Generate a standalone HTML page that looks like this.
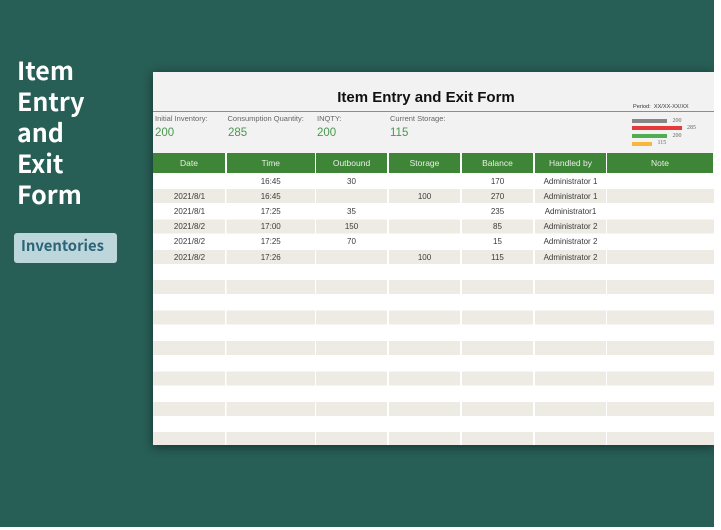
<!DOCTYPE html>
<html lang="en"><head><meta charset="utf-8"><title>Item Entry and Exit Form</title>
<style>
html,body{margin:0;padding:0;width:721px;height:530px;overflow:hidden;background:#fff}
*{box-sizing:border-box}
#bg{position:absolute;left:0;top:0;width:714px;height:527px;background:#275e55;overflow:hidden}
#side{position:absolute;left:17px;top:54.5px;font:700 25px/31px "Noto Sans CJK SC","Liberation Sans",sans-serif;color:#fff;filter:blur(.3px)}
#tag{position:absolute;left:14px;top:233px;width:103px;height:30px;background:#bdd6dc;border-radius:3px;color:#2c6478;font:700 14.8px/25px "Noto Sans CJK SC","Liberation Sans",sans-serif;padding-left:7px;filter:blur(.2px)}
#panel{position:absolute;left:153px;top:72px;width:561px;height:373px;background:#fff;box-shadow:0 2px 10px rgba(0,0,0,.45)}
#top{position:absolute;left:0;top:0;width:561px;height:81px;background:#f2f2f2}
#rule{position:absolute;left:0;top:39px;width:561px;height:1px;background:#62a868}
.a{position:absolute;font-family:"Liberation Sans",sans-serif;white-space:nowrap;filter:blur(.25px)}
#title{left:0;width:546px;top:16px;text-align:center;font-size:15px;font-weight:700;color:#111;line-height:20px}
.l{font-size:7.5px;color:#666;top:41px;line-height:11px}
.v{font-size:11.5px;color:#48984f;top:54px;line-height:14px}
.c{position:absolute;text-align:center;font:8px/15px "Liberation Sans",sans-serif;color:#3a3a3a;filter:blur(.2px)}
.h{position:absolute;top:81px;height:20px;background:#3f8537;color:#e6f0e4;text-align:center;font:8.5px/20px "Liberation Sans",sans-serif}
.b{position:absolute;height:4px;left:479px}
.n{position:absolute;font:6px/7px "Liberation Serif",serif;color:#666}
</style></head><body>
<div id="bg">
<div id="side">Item<br>Entry<br>and<br>Exit<br>Form</div>
<div id="tag">Inventories</div>
<div id="panel">
<div id="top"></div><div id="rule"></div>
<div class="a" id="title">Item Entry and Exit Form</div>
<div class="a" style="left:480px;top:30.5px;font-size:5.6px;line-height:8px;color:#333">Period:&nbsp; XX/XX-XX/XX</div>
<div class="a l" style="left:2px">Initial Inventory:</div>
<div class="a l" style="left:74.5px">Consumption Quantity:</div>
<div class="a l" style="left:164px">INQTY:</div>
<div class="a l" style="left:237px">Current Storage:</div>
<div class="a v" style="left:2px">200</div>
<div class="a v" style="left:75px">285</div>
<div class="a v" style="left:164px">200</div>
<div class="a v" style="left:237px">115</div>

<div class="b" style="top:46.5px;width:35px;background:#868686"></div><div class="n" style="left:519.5px;top:45.5px">200</div>
<div class="b" style="top:54px;width:50px;background:#e53a3a"></div><div class="n" style="left:534px;top:53px">285</div>
<div class="b" style="top:62px;width:35px;background:#4fae52"></div><div class="n" style="left:519.5px;top:60.5px">200</div>
<div class="b" style="top:69.5px;width:20px;background:#f6b73c"></div><div class="n" style="left:504.5px;top:68px">115</div>

<div class="h" style="left:0;width:72px">Date</div>
<div class="h" style="left:73.5px;width:88.5px">Time</div>
<div class="h" style="left:163px;width:71px">Outbound</div>
<div class="h" style="left:236px;width:71px">Storage</div>
<div class="h" style="left:309px;width:71px">Balance</div>
<div class="h" style="left:382px;width:71px">Handled by</div>
<div class="h" style="left:454px;width:106px">Note</div>

<svg style="position:absolute;left:0;top:0" width="561" height="373">
<defs><g id="r" fill="#edebe3"><rect x="0" width="72" height="14"/><rect x="73.5" width="88.5" height="14"/><rect x="163" width="71" height="14"/><rect x="236" width="71" height="14"/><rect x="309" width="71" height="14"/><rect x="382" width="71" height="14"/><rect x="454" width="107" height="14"/></g></defs>
<use href="#r" y="117"/><use href="#r" y="147.5"/><use href="#r" y="178"/><use href="#r" y="208"/><use href="#r" y="238.5"/><use href="#r" y="269"/><use href="#r" y="299.5"/><use href="#r" y="330"/><use href="#r" y="360"/>
</svg>

<div class="c" style="left:73.5px;width:88.5px;top:102px">16:45</div><div class="c" style="left:163px;width:71px;top:102px">30</div><div class="c" style="left:309px;width:71px;top:102px">170</div><div class="c" style="left:382px;width:71px;top:102px">Administrator 1</div>

<div class="c" style="left:0;width:73px;top:117px">2021/8/1</div><div class="c" style="left:73.5px;width:88.5px;top:117px">16:45</div><div class="c" style="left:236px;width:71px;top:117px">100</div><div class="c" style="left:309px;width:71px;top:117px">270</div><div class="c" style="left:382px;width:71px;top:117px">Administrator 1</div>

<div class="c" style="left:0;width:73px;top:132px">2021/8/1</div><div class="c" style="left:73.5px;width:88.5px;top:132px">17:25</div><div class="c" style="left:163px;width:71px;top:132px">35</div><div class="c" style="left:309px;width:71px;top:132px">235</div><div class="c" style="left:382px;width:71px;top:132px">Administrator1</div>

<div class="c" style="left:0;width:73px;top:147px">2021/8/2</div><div class="c" style="left:73.5px;width:88.5px;top:147px">17:00</div><div class="c" style="left:163px;width:71px;top:147px">150</div><div class="c" style="left:309px;width:71px;top:147px">85</div><div class="c" style="left:382px;width:71px;top:147px">Administrator 2</div>

<div class="c" style="left:0;width:73px;top:162px">2021/8/2</div><div class="c" style="left:73.5px;width:88.5px;top:162px">17:25</div><div class="c" style="left:163px;width:71px;top:162px">70</div><div class="c" style="left:309px;width:71px;top:162px">15</div><div class="c" style="left:382px;width:71px;top:162px">Administrator 2</div>

<div class="c" style="left:0;width:73px;top:178px">2021/8/2</div><div class="c" style="left:73.5px;width:88.5px;top:178px">17:26</div><div class="c" style="left:236px;width:71px;top:178px">100</div><div class="c" style="left:309px;width:71px;top:178px">115</div><div class="c" style="left:382px;width:71px;top:178px">Administrator 2</div>
</div>
</div>
</body></html>
